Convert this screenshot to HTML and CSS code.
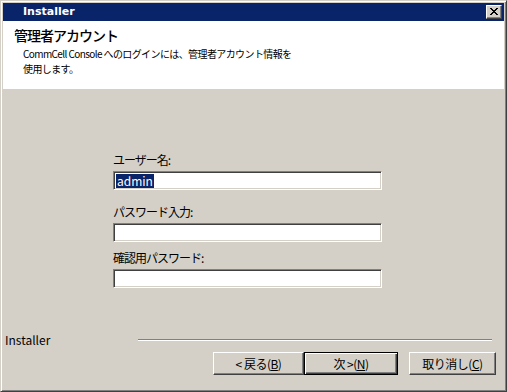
FILE: index.html
```html
<!DOCTYPE html>
<html lang="ja">
<head>
<meta charset="utf-8">
<title>Installer</title>
<link rel="stylesheet" href="styles.css">
</head>
<body>
<div class="window">
  <div class="titlebar">
    <span class="title">Installer</span>
    <button class="close" type="button" aria-label="閉じる">
      <svg width="8" height="7" viewBox="0 0 8 7"><path d="M0 0h2v1h1v1h2v-1h1v-1h2v1h-1v1h-1v1h-1v1h1v1h1v1h1v1h-2v-1h-1v-1h-2v1h-1v1h-2v-1h1v-1h1v-1h1v-1h-1v-1h-1v-1h-1z" fill="#000"/></svg>
    </button>
  </div>
  <div class="header">
    <div class="header-title">管理者アカウント</div>
    <div class="header-sub">
      <div class="sub-line">CommCell Console へのログインには、管理者アカウント情報を</div>
      <div class="sub-line">使用します。</div>
    </div>
  </div>
  <div class="body">
    <div class="form">
      <label class="label">ユーザー名:</label>
      <div class="input"><span class="sel">admin</span></div>
      <label class="label label-2">パスワード入力:</label>
      <div class="input"></div>
      <label class="label label-3">確認用パスワード:</label>
      <div class="input"></div>
    </div>
  </div>
  <div class="footer">
    <div class="brand-row">
      <span class="brand">Installer</span>
      <span class="rule"></span>
    </div>
    <div class="buttons">
      <button class="btn btn-back" type="button">&lt; 戻る(<u>B</u>)</button>
      <button class="btn btn-default" type="button">次 &gt;(<u>N</u>)</button>
      <button class="btn btn-cancel" type="button">取り消し(<u>C</u>)</button>
    </div>
  </div>
</div>
</body>
</html>
```

FILE: styles.css
```css
* { box-sizing: border-box; }
html, body { margin: 0; padding: 0; }
body {
  font-family: "Noto Sans CJK JP", "Liberation Sans", sans-serif;
  font-size: 12px;
  color: #000;
  background: #d4d0c8;
}
.window {
  width: 507px;
  height: 392px;
  display: flex;
  flex-direction: column;
  background: #d4d0c8;
  border: 1px solid;
  border-color: #d4d0c8 #404040 #404040 #d4d0c8;
  box-shadow: inset 1px 1px #ffffff, inset -1px -1px #808080;
  padding: 2px;
}
.titlebar {
  height: 18px;
  background: #0a246a;
  display: flex;
  align-items: flex-start;
  justify-content: space-between;
  padding: 2px 2px 0 20px;
}
.title {
  font-family: "DejaVu Sans", "Liberation Sans", sans-serif;
  font-weight: bold;
  font-size: 11px;
  line-height: 14px;
  color: #fff;
}
.close {
  width: 16px;
  height: 14px;
  padding: 0;
  margin: 0;
  background: #d4d0c8;
  border: 1px solid;
  border-color: #ffffff #404040 #404040 #ffffff;
  box-shadow: inset -1px -1px #808080;
  display: flex;
  align-items: center;
  justify-content: center;
}
.close svg { display: block; margin: 0 1px 1px 0; }
.header {
  height: 68px;
  background: #fff;
  padding: 5px 0 0 11px;
}
.header-title {
  font-size: 14px;
  line-height: 18px;
  font-weight: 500;
  letter-spacing: -1px;
}
.header-sub {
  margin: 2px 0 0 9px;
  font-size: 10px;
  letter-spacing: -0.6px;
}
.sub-line {
  height: 15px;
  line-height: 15px;
  white-space: nowrap;
}
.body {
  flex: 1;
  padding: 64px 0 0 110px;
}
.form { display: flex; flex-direction: column; width: 269px; }
.label {
  font-size: 12px;
  line-height: 14px;
  margin-bottom: 4px;
  letter-spacing: -1px;
}
.label-2 { margin-top: 15px; }
.label-3 { margin-top: 9px; }
.input {
  height: 19px;
  background: #fff;
  border: 1px solid;
  border-color: #808080 #ffffff #ffffff #808080;
  box-shadow: inset 1px 1px #404040, inset -1px -1px #d4d0c8;
  padding: 2px 0 0 2px;
  display: flex;
  align-items: flex-start;
}
.sel {
  background: #0a246a;
  color: #fff;
  font-size: 12px;
  line-height: 14px;
  padding: 0 1px;
}
.footer {
  padding: 0 8px 14px 2px;
}
.brand-row {
  display: grid;
  grid-template-columns: 133px 1fr;
  align-items: center;
  height: 14px;
  padding-right: 4px;
}
.brand {
  font-size: 12px;
  line-height: 14px;
  color: #000;
}
.rule {
  height: 2px;
  border-top: 1px solid #808080;
  border-bottom: 1px solid #ffffff;
}
.buttons {
  margin-top: 5px;
  display: flex;
  justify-content: flex-end;
}
.btn {
  height: 23px;
  padding: 0;
  margin: 0;
  font-family: "Noto Sans CJK JP", "Liberation Sans", sans-serif;
  font-size: 12px;
  line-height: 14px;
  letter-spacing: -0.5px;
  color: #000;
  background: #d4d0c8;
  border: 1px solid;
  border-color: #ffffff #404040 #404040 #ffffff;
  box-shadow: inset -1px -1px #808080;
}
.btn u { text-decoration: underline; }
.btn-back { width: 91px; }
.btn-default {
  width: 94px;
  border: 1px solid #000;
  box-shadow: inset 1px 1px #ffffff, inset -1px -1px #404040, inset -2px -2px #808080;
}
.btn-cancel { width: 87px; margin-left: 11px; }
```
